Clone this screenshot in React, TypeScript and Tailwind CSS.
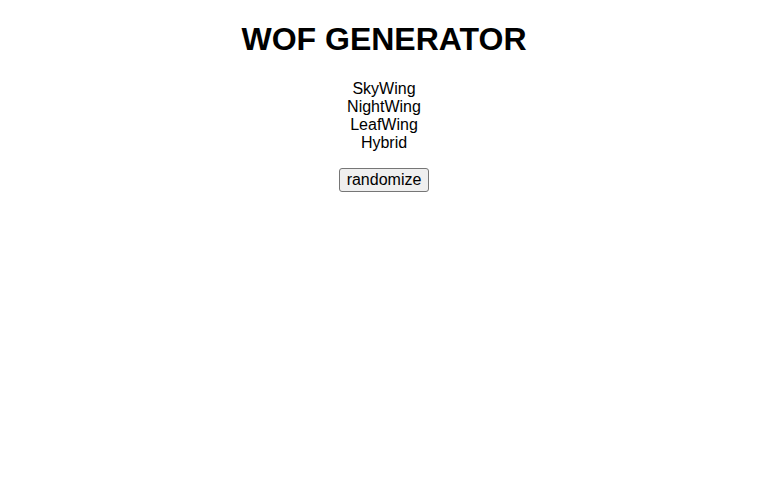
import { useState } from 'react'

const tribes = ['SkyWing', 'NightWing', 'LeafWing', 'Hybrid']

export default function App() {
  const [list, setList] = useState(tribes)

  const randomize = () => {
    setList([...list].sort(() => Math.random() - 0.5))
  }

  return (
    <div className="min-h-screen bg-white text-center text-black font-['Liberation_Sans',Arial,sans-serif]">
      <h1 className="pt-[21px] mb-[22px] text-[32px] leading-[37px] font-bold">WOF GENERATOR</h1>
      <div className="text-base leading-[18px]">
        {list.map((t) => (
          <div key={t}>{t}</div>
        ))}
      </div>
      <div className="mt-4">
        <button
          onClick={randomize}
          className="h-[24px] px-[7px] text-base leading-[18px] bg-[#efefef] border border-[#767676] rounded-[3px]"
        >
          randomize
        </button>
      </div>
    </div>
  )
}
